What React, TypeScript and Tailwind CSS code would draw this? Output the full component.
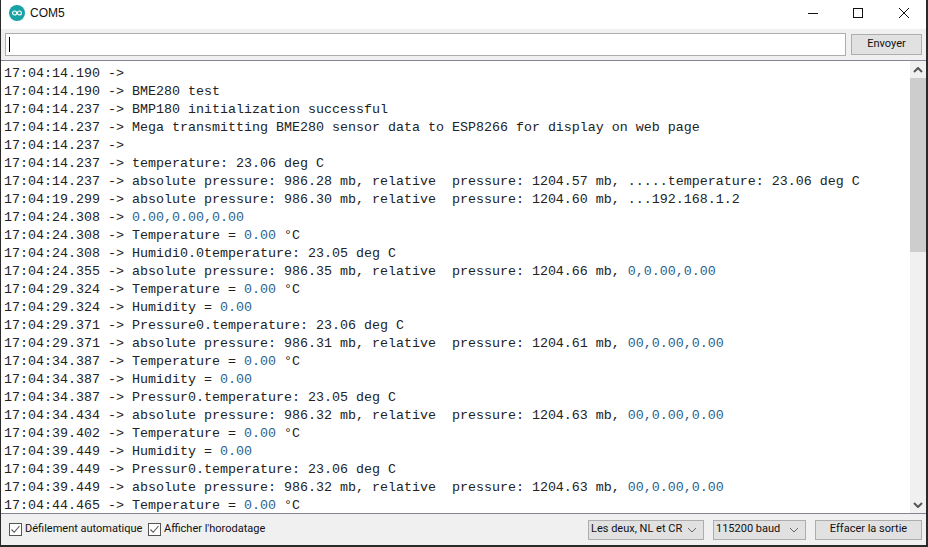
const lines = [
  '17:04:14.190 -> ',
  '17:04:14.190 -> BME280 test',
  '17:04:14.237 -> BMP180 initialization successful',
  '17:04:14.237 -> Mega transmitting BME280 sensor data to ESP8266 for display on web page',
  '17:04:14.237 -> ',
  '17:04:14.237 -> temperature: 23.06 deg C',
  '17:04:14.237 -> absolute pressure: 986.28 mb, relative  pressure: 1204.57 mb, .....temperature: 23.06 deg C',
  '17:04:19.299 -> absolute pressure: 986.30 mb, relative  pressure: 1204.60 mb, ...192.168.1.2',
  '17:04:24.308 -> 0.00,0.00,0.00',
  '17:04:24.308 -> Temperature = 0.00 °C',
  '17:04:24.308 -> Humidi0.0temperature: 23.05 deg C',
  '17:04:24.355 -> absolute pressure: 986.35 mb, relative  pressure: 1204.66 mb, 0,0.00,0.00',
  '17:04:29.324 -> Temperature = 0.00 °C',
  '17:04:29.324 -> Humidity = 0.00',
  '17:04:29.371 -> Pressure0.temperature: 23.06 deg C',
  '17:04:29.371 -> absolute pressure: 986.31 mb, relative  pressure: 1204.61 mb, 00,0.00,0.00',
  '17:04:34.387 -> Temperature = 0.00 °C',
  '17:04:34.387 -> Humidity = 0.00',
  '17:04:34.387 -> Pressur0.temperature: 23.05 deg C',
  '17:04:34.434 -> absolute pressure: 986.32 mb, relative  pressure: 1204.63 mb, 00,0.00,0.00',
  '17:04:39.402 -> Temperature = 0.00 °C',
  '17:04:39.449 -> Humidity = 0.00',
  '17:04:39.449 -> Pressur0.temperature: 23.06 deg C',
  '17:04:39.449 -> absolute pressure: 986.32 mb, relative  pressure: 1204.63 mb, 00,0.00,0.00',
  '17:04:44.465 -> Temperature = 0.00 °C',
];

// the trailing zero values read bluer than the rest of the line
function Line({ text }: { text: string }) {
  const m = text.match(/0[0.,]*0(?= °C$|$)/);
  if (!m || m.index === undefined) return <div className="h-[18px] whitespace-pre">{text}</div>;
  return (
    <div className="h-[18px] whitespace-pre">
      {text.slice(0, m.index)}
      <span className="text-[#2f5f8a]">{m[0]}</span>
      {text.slice(m.index + m[0].length)}
    </div>
  );
}

function Check({ label }: { label: string }) {
  return (
    <label className="flex items-center gap-[3px] whitespace-nowrap">
      <span className="flex h-[13px] w-[13px] items-center justify-center border border-[#555] bg-white">
        <svg viewBox="0 0 11 11" className="h-[11px] w-[11px]" fill="none" stroke="#555" strokeWidth="1.1">
          <path d="M1.5 5.5 L4.2 8.3 L9.5 2" />
        </svg>
      </span>
      <span>{label}</span>
    </label>
  );
}

function Select({ label, width }: { label: string; width: string }) {
  return (
    <div className={`flex h-[20px] items-center justify-between whitespace-nowrap border border-[#adadad] bg-[#e1e1e1] pl-[2px] pr-[6px] ${width}`}>
      <span>{label}</span>
      <svg viewBox="0 0 10 6" className="h-[6px] w-[10px]" fill="none" stroke="#666" strokeWidth="1">
        <path d="M1 1 L5 5 L9 1" />
      </svg>
    </div>
  );
}

export default function App() {
  return (
    <div className="box-border flex h-[547px] w-[928px] flex-col overflow-hidden border-b-2 border-l border-r-2 border-[#2a2a2a] bg-[#f0f0f0] font-['Roboto',sans-serif] text-[11px] text-[#111]">
      {/* title bar */}
      <div className="flex h-[29px] shrink-0 items-center bg-white pb-[3px]">
        <svg viewBox="0 0 16 16" className="ml-[8px] h-4 w-4">
          <circle cx="8" cy="8" r="8" fill="#17a2a6" />
          <circle cx="5.6" cy="8" r="2" fill="none" stroke="#fff" strokeWidth="1.2" />
          <circle cx="10.4" cy="8" r="2" fill="none" stroke="#fff" strokeWidth="1.2" />
        </svg>
        <span className="ml-[5px] font-['Liberation_Sans',sans-serif] text-[12px] text-[#111]">COM5</span>
        <div className="ml-auto flex items-center">
          <svg viewBox="0 0 46 26" className="h-[26px] w-[46px]" stroke="#111" fill="none">
            <path d="M20 13.5 H30" />
          </svg>
          <svg viewBox="0 0 46 26" className="h-[26px] w-[46px]" stroke="#111" fill="none">
            <rect x="19.5" y="8.5" width="9" height="9" />
          </svg>
          <svg viewBox="0 0 46 26" className="h-[26px] w-[46px]" stroke="#111" fill="none">
            <path d="M19 8 L29 18 M29 8 L19 18" />
          </svg>
        </div>
      </div>

      {/* send row */}
      <div className="flex h-[31px] shrink-0 items-center gap-[5px] pl-[4px] pr-[4px]">
        <div className="flex h-[23px] flex-1 items-center border border-[#adadad] bg-white pl-[3px]">
          <div className="h-[15px] w-px bg-black" />
        </div>
        <div className="flex h-[21px] w-[71px] items-center justify-center border border-[#adadad] bg-[#e1e1e1]">Envoyer</div>
      </div>

      {/* output */}
      <div className="flex min-h-0 flex-1 border-y border-[#828790] bg-white">
        <div className="min-w-0 flex-1 overflow-hidden pl-[3px] pt-[4px] font-['Liberation_Mono',monospace] text-[13.33px] leading-[18px] text-[#222]">
          {lines.map((line, i) => (
            <Line key={i} text={line} />
          ))}
        </div>
        <div className="flex w-[16px] shrink-0 flex-col bg-[#f0f0f0]">
          <div className="flex h-[17px] items-center justify-center">
            <svg viewBox="0 0 10 6" className="h-[6px] w-[10px]" fill="none" stroke="#555" strokeWidth="2">
              <path d="M1 5 L5 1 L9 5" />
            </svg>
          </div>
          <div className="h-[174px] bg-[#cdcdcd]" />
          <div className="mt-auto flex h-[17px] items-center justify-center">
            <svg viewBox="0 0 10 6" className="h-[6px] w-[10px]" fill="none" stroke="#555" strokeWidth="2">
              <path d="M1 1 L5 5 L9 1" />
            </svg>
          </div>
        </div>
      </div>

      {/* footer */}
      <div className="flex h-[31px] shrink-0 items-center pl-[8px] pr-[4px]">
        <div className="w-[139px]"><Check label="Défilement automatique" /></div>
        <Check label="Afficher l'horodatage" />
        <div className="ml-auto flex items-center gap-[9px]">
          <Select label="Les deux, NL et CR" width="w-[116px]" />
          <Select label="115200 baud" width="w-[93px]" />
          <div className="flex h-[20px] w-[107px] items-center justify-center border border-[#adadad] bg-[#e1e1e1]">Effacer la sortie</div>
        </div>
      </div>
    </div>
  );
}
